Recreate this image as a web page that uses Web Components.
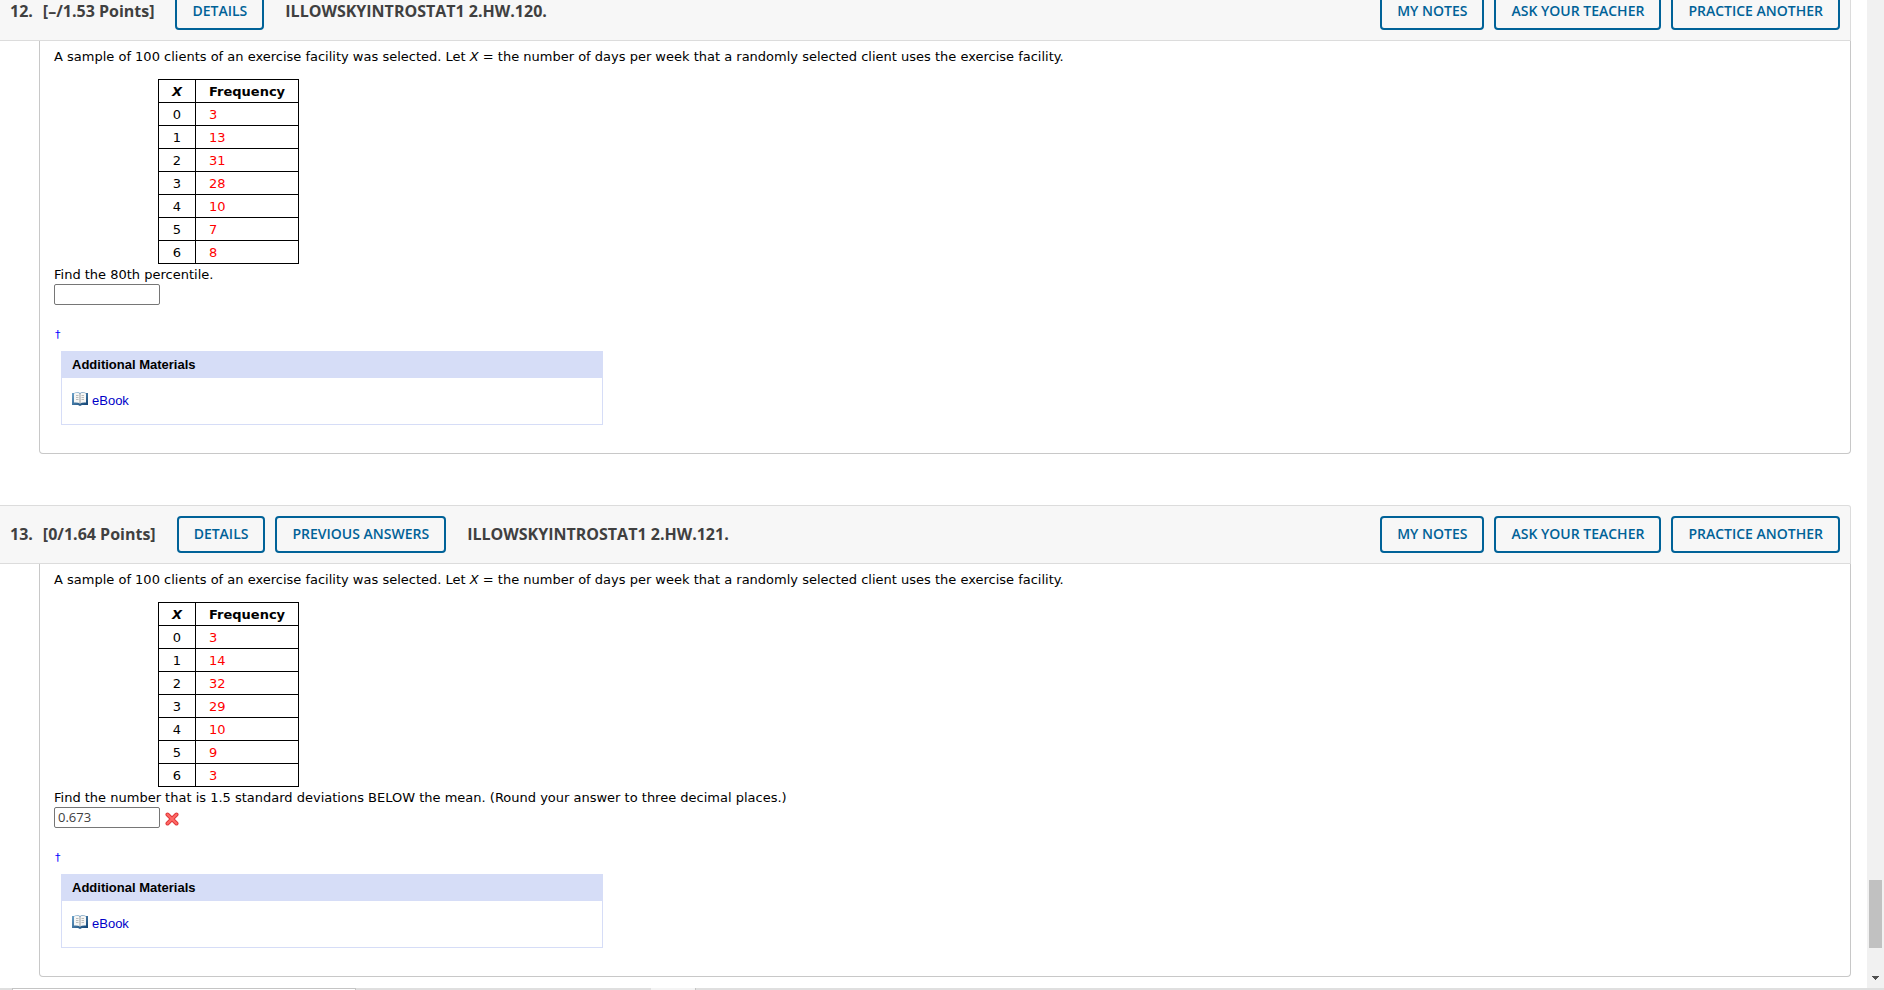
<!DOCTYPE html>
<html lang="en">
<head>
<meta charset="utf-8">
<title>Homework</title>
<style>
  html, body { margin: 0; height: 100%; overflow: hidden; background: #fff; }
  body { font: 13px/16px "DejaVu Sans", sans-serif; color: #000; }
</style>
</head>
<body>
<homework-window>
  <question-card number="12." points="[–/1.53 Points]" code="ILLOWSKYINTROSTAT1 2.HW.120." frequencies="3,13,31,28,10,7,8" field="answer-12">Find the 80th percentile.</question-card>
  <question-card number="13." points="[0/1.64 Points]" code="ILLOWSKYINTROSTAT1 2.HW.121." frequencies="3,14,32,29,10,9,3" field="answer-13" value="0.673" previous wrong>Find the number that is 1.5 standard deviations BELOW the mean. (Round your answer to three decimal places.)</question-card>
</homework-window>

<script>
class HomeworkWindow extends HTMLElement {
  constructor() {
    super();
    this.attachShadow({ mode: "open" }).innerHTML = `
      <style>
        :host { display: grid; grid-template: minmax(0, 1fr) auto / minmax(0, 1fr) 17px; height: 100vh; }
        main { overflow: hidden; padding-right: 16px; }
        .list { display: flex; flex-direction: column; gap: 51px; margin-top: -18px; }
        status-strip { grid-column: 1 / -1; }
      </style>
      <main><div class="list"><slot></slot></div></main>
      <scroll-rail></scroll-rail>
      <status-strip></status-strip>`;
  }
}

class ScrollRail extends HTMLElement {
  constructor() {
    super();
    this.attachShadow({ mode: "open" }).innerHTML = `
      <style>
        :host { display: flex; flex-direction: column; justify-content: flex-end; align-items: center; background: #f1f1f1; }
        .thumb { width: 13px; height: 68px; background: #c1c1c1; }
        svg { display: block; margin: 28px 0 7px; }
      </style>
      <div class="thumb"></div>
      <svg width="7" height="5" viewBox="0 0 7 5" shape-rendering="crispEdges"><path d="M0 0H7V1H6V2H5V3H4V4H3V3H2V2H1V1H0Z" fill="#505050"/></svg>`;
  }
}

class StatusStrip extends HTMLElement {
  constructor() {
    super();
    this.attachShadow({ mode: "open" }).innerHTML = `
      <style>
        :host { display: flex; height: 2px; padding-left: 12px; background: #dfdfdf; }
        .tab { box-sizing: border-box; width: 344px; border: 1px solid #c4c4c4; border-bottom: 0; background: #fff; }
        .light { box-sizing: border-box; width: 45px; margin-left: 295px; border-right: 1px solid #c4c4c4; background: #f4f4f4; }
      </style>
      <div class="tab"></div><div class="light"></div>`;
  }
}

class ActionButton extends HTMLElement {
  constructor() {
    super();
    this.attachShadow({ mode: "open" }).innerHTML = `
      <style>
        :host { display: block; }
        button { display: block; box-sizing: border-box; height: 37px; margin: 0; padding: 0 15px 2px; border: 2px solid #006298; border-radius: 4px;
          background: #f7f7f7; color: #006298; font: 600 14px/20px "Open Sans", sans-serif; white-space: nowrap; }
      </style>
      <button type="button"><slot></slot></button>`;
  }
}

class FrequencyTable extends HTMLElement {
  connectedCallback() {
    const rows = this.getAttribute("values").split(",")
      .map((v, i) => `<tr><td class="x">${i}</td><td class="f">${v}</td></tr>`).join("");
    this.attachShadow({ mode: "open" }).innerHTML = `
      <style>
        :host { display: block; }
        table { border-collapse: collapse; }
        th, td { box-sizing: border-box; height: 23px; padding: 4px 13px 2px; border: 1px solid #000; line-height: 16px; text-align: left; }
        .x { padding: 4px 0 2px; width: 37px; text-align: center; }
        .f { color: #f00; }
      </style>
      <table><thead><tr><th class="x" scope="col"><i>X</i></th><th scope="col">Frequency</th></tr></thead><tbody>${rows}</tbody></table>`;
  }
}

class AdditionalMaterials extends HTMLElement {
  constructor() {
    super();
    this.attachShadow({ mode: "open" }).innerHTML = `
      <style>
        :host { display: block; box-sizing: border-box; max-width: 542px; border: 1px solid #d6ddf7; font: 13px/16px "Liberation Sans", Arial, sans-serif; }
        h3 { margin: 0; padding: 5px 10px; font-size: 13px; line-height: 16px; background: #d6ddf7; }
        .links { display: flex; padding: 14px 10px 15px; }
        a { display: flex; gap: 4px; color: #0000c8; text-decoration: none; line-height: 17px; }
        svg { display: block; }
      </style>
      <h3>Additional Materials</h3>
      <div class="links">
        <a href="#ebook">
          <svg width="16" height="14" viewBox="0 0 16 14">
            <defs><linearGradient id="c" x1="0" y1="0" x2="1" y2="1"><stop offset="0" stop-color="#6fa5cc"/><stop offset="1" stop-color="#0d3f70"/></linearGradient></defs>
            <path d="M0 1H2Q6 -.5 8 1 10 -.5 14 1H16V13H10L8 14 6 13H0Z" fill="url(#c)"/>
            <path d="M2 1.500Q6 0 8 2 10 0 14 1.500V10.500Q10 10 8 11.500 6 10 2 10.500Z" fill="#f6f6f4"/>
            <path d="M8 2V11.500" stroke="#9ba0a3"/>
            <path d="M4 3.500H6.500M4 5.500H6.500M4 7.500H6.500M9.500 3.500H12M9.500 5.500H12M9.500 7.500H12" stroke="#b9bcbc"/>
          </svg>
          <span>eBook</span>
        </a>
      </div>`;
  }
}

class QuestionCard extends HTMLElement {
  connectedCallback() {
    const get = name => this.getAttribute(name) || "";
    const previous = this.hasAttribute("previous") ? "<action-button>PREVIOUS ANSWERS</action-button>" : "";
    const mark = this.hasAttribute("wrong") ? `
      <svg width="14" height="16" viewBox="0 0 14 16" role="img" aria-label="incorrect">
        <path d="M2.500 4.500L11.500 13.500M11.500 4.500L2.500 13.500" stroke="#e0393b" stroke-width="4" stroke-linecap="round"/>
        <path d="M2.500 4.500L11.500 13.500M11.500 4.500L2.500 13.500" stroke="#ff6a66" stroke-width="2" stroke-linecap="round"/>
      </svg>` : "";
    this.attachShadow({ mode: "open" }).innerHTML = `
      <style>
        :host { display: block; }
        header { display: flex; align-items: center; gap: 10px; box-sizing: border-box; height: 59px; padding: 0 10px; border: 1px solid #dcdcdc; border-left: 0;
          border-radius: 0 3px 0 0; background: #f7f7f7; color: #404040; font: 700 16px/22px "Open Sans", sans-serif; white-space: nowrap; }
        h2, .code { margin: 0; padding-bottom: 2px; font: inherit; }
        h2 { display: flex; gap: 10px; margin-right: 11px; }
        .code { margin-left: 11px; }
        .tools { display: flex; gap: 10px; margin-left: auto; }
        section { margin-left: 39px; padding: 8px 14px 28px; border: 1px solid #c8c8c8; border-top: 0; border-radius: 0 0 4px 4px; }
        p { margin: 0 0 14px; }
        frequency-table { margin: 0 0 3px 104px; }
        label { display: block; }
        .answer { display: flex; align-items: center; gap: 5px; margin: 1px 0 22px; }
        input { box-sizing: border-box; width: 106px; height: 21px; margin: 0; padding: 0 3px 2px; border: 1px solid #767676; border-radius: 2px;
          background: #fff; color: #404040; font: 13px/16px "Open Sans", sans-serif; }
        .note { display: block; width: 8px; padding-left: 1px; color: #00f; font-size: 11px; line-height: 16px; text-decoration: none; }
        additional-materials { margin: 8px 0 0 7px; }
      </style>
      <header>
        <h2><span>${get("number")}</span><span>${get("points")}</span></h2>
        <action-button>DETAILS</action-button>${previous}
        <span class="code">${get("code")}</span>
        <div class="tools">
          <action-button>MY NOTES</action-button>
          <action-button>ASK YOUR TEACHER</action-button>
          <action-button>PRACTICE ANOTHER</action-button>
        </div>
      </header>
      <section>
        <p>A sample of 100 clients of an exercise facility was selected. Let <i>X</i> = the number of days per week that a randomly selected client uses the exercise facility.</p>
        <frequency-table values="${get("frequencies")}"></frequency-table>
        <label for="${get("field")}"><slot></slot></label>
        <div class="answer"><input type="text" id="${get("field")}" aria-label="Answer" value="${get("value")}">${mark}</div>
        <a class="note" href="#note">†</a>
        <additional-materials></additional-materials>
      </section>`;
  }
}

customElements.define("action-button", ActionButton);
customElements.define("frequency-table", FrequencyTable);
customElements.define("additional-materials", AdditionalMaterials);
customElements.define("question-card", QuestionCard);
customElements.define("scroll-rail", ScrollRail);
customElements.define("status-strip", StatusStrip);
customElements.define("homework-window", HomeworkWindow);
</script>
</body>
</html>
